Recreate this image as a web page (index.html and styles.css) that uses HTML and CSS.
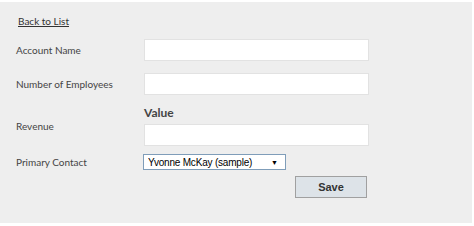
FILE: index.html
```html
<!DOCTYPE html>
<html lang="en">

<head>
    <meta charset="UTF-8">
    <title>Edit Account</title>
    <link rel="stylesheet" href="styles.css">
</head>

<body>
    <div class="panel">
        <a class="back-link" href="#">Back to List</a>

        <form class="account-form">
            <div class="form-row">
                <label for="accountName">Account Name</label>
                <input type="text" id="accountName">
            </div>
            <div class="form-row">
                <label for="employees">Number of Employees</label>
                <input type="text" id="employees">
            </div>
            <div class="form-row revenue-row">
                <label for="revenue">Revenue</label>
                <div class="field-group">
                    <span class="field-title">Value</span>
                    <input type="text" id="revenue">
                </div>
            </div>
            <div class="form-row contact-row">
                <label for="contact">Primary Contact</label>
                <div class="select-wrap">
                    <select id="contact">
                        <option>Yvonne McKay (sample)</option>
                    </select>
                </div>
            </div>
            <div class="actions">
                <button type="button" class="save-btn">Save</button>
            </div>
        </form>
    </div>
</body>

</html>
```

FILE: styles.css
```css
body {
    margin: 0;
    padding: 0;
    background-color: #fff;
    font-family: Lato, "Liberation Sans", Arial, sans-serif;
}

.panel {
    width: 472px;
    height: 221px;
    margin-top: 2px;
    background-color: #eeeeee;
    box-sizing: border-box;
    padding: 7px 0 0 16px;
}

.back-link {
    display: inline-block;
    margin-left: 2px;
    font-size: 10px;
    color: #333;
    text-decoration: underline;
}

.account-form {
    margin-top: 11px;
}

.form-row {
    display: flex;
    align-items: center;
    margin-bottom: 12px;
}

.form-row label {
    width: 128px;
    font-size: 10px;
    color: #444;
}

.form-row input {
    width: 225px;
    height: 22px;
    box-sizing: border-box;
    border: 1px solid #e2e2e2;
    background-color: #fff;
    padding: 2px 4px;
}

.revenue-row {
    margin-top: -2px;
    margin-bottom: 8px;
}

.field-group {
    display: flex;
    flex-direction: column;
}

.field-title {
    font-size: 12px;
    font-weight: bold;
    color: #444;
    margin-bottom: 4px;
}

.contact-row {
    margin-bottom: 6px;
}

.select-wrap {
    position: relative;
    margin-left: -1px;
}

.select-wrap select {
    display: block;
    width: 143px;
    height: 16px;
    box-sizing: border-box;
    border: 1px solid #7f9db9;
    background-color: #fff;
    font-family: "Liberation Sans", Arial, sans-serif;
    font-size: 10px;
    letter-spacing: -0.2px;
    color: #000;
    padding: 0 0 0 4px;
    -webkit-appearance: none;
    appearance: none;
    border-radius: 0;
}

.select-wrap::after {
    content: "\25BC";
    position: absolute;
    right: 8px;
    top: 4px;
    font-size: 7px;
    color: #000;
    pointer-events: none;
}

.actions {
    padding-left: 279px;
}

.save-btn {
    display: block;
    width: 72px;
    height: 22px;
    background-color: #dde3e8;
    border: 1px solid #a0a0a0;
    font-family: "Liberation Sans", Arial, sans-serif;
    font-size: 11px;
    font-weight: bold;
    color: #333;
    cursor: pointer;
}
```
